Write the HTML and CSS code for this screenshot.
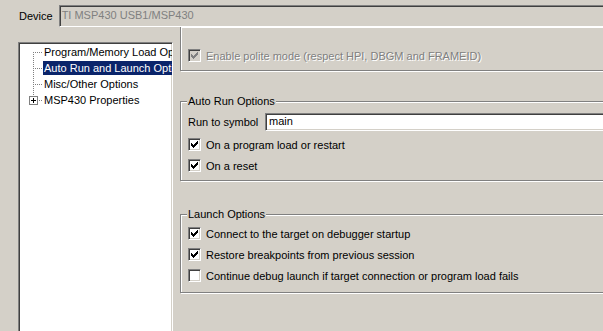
FILE: index.html
```html
<!DOCTYPE html>
<html lang="en">
<head>
  <meta charset="UTF-8">
  <title>Debug Properties</title>
  <link rel="stylesheet" href="styles.css">
</head>
<body>

  <div class="device-row">
    <span class="device-label">Device</span>
    <div class="device-field">TI MSP430 USB1/MSP430</div>
  </div>

  <div class="main">
    <div class="tree">
      <div class="tree-row first"><span class="twig"></span><span class="node">Program/Memory Load Options</span></div>
      <div class="tree-row"><span class="twig"></span><span class="node selected">Auto Run and Launch Options</span></div>
      <div class="tree-row"><span class="twig"></span><span class="node">Misc/Other Options</span></div>
      <div class="tree-row last">
        <span class="twig">
          <svg class="expander" width="9" height="9" viewBox="0 0 9 9" shape-rendering="crispEdges">
            <rect x="0.5" y="0.5" width="8" height="8" fill="#fff" stroke="#808080"/>
            <path d="M2 4h5v1h-5z M4 2h1v5h-1z" fill="#000"/>
          </svg>
        </span><span class="node">MSP430 Properties</span>
      </div>
    </div>

    <div class="pane">
      <div class="group polite">
        <div class="check-row disabled">
          <span class="box"><svg width="7" height="7" viewBox="0 0 7 7" shape-rendering="crispEdges"><path d="M0 2h1v3h-1z M1 3h1v3h-1z M2 4h1v3h-1z M3 3h1v3h-1z M4 2h1v3h-1z M5 1h1v3h-1z M6 0h1v3h-1z"/></svg></span>
          <span>Enable polite mode (respect HPI, DBGM and FRAMEID)</span>
        </div>
      </div>

      <div class="group auto-run">
        <div class="group-title">Auto Run Options</div>
        <div class="symbol-row">
          <span class="symbol-label">Run to symbol</span>
          <div class="text-field">main</div>
        </div>
        <div class="check-row">
          <span class="box"><svg width="7" height="7" viewBox="0 0 7 7" shape-rendering="crispEdges"><path d="M0 2h1v3h-1z M1 3h1v3h-1z M2 4h1v3h-1z M3 3h1v3h-1z M4 2h1v3h-1z M5 1h1v3h-1z M6 0h1v3h-1z"/></svg></span>
          <span>On a program load or restart</span>
        </div>
        <div class="check-row">
          <span class="box"><svg width="7" height="7" viewBox="0 0 7 7" shape-rendering="crispEdges"><path d="M0 2h1v3h-1z M1 3h1v3h-1z M2 4h1v3h-1z M3 3h1v3h-1z M4 2h1v3h-1z M5 1h1v3h-1z M6 0h1v3h-1z"/></svg></span>
          <span>On a reset</span>
        </div>
      </div>

      <div class="group launch">
        <div class="group-title">Launch Options</div>
        <div class="check-row">
          <span class="box"><svg width="7" height="7" viewBox="0 0 7 7" shape-rendering="crispEdges"><path d="M0 2h1v3h-1z M1 3h1v3h-1z M2 4h1v3h-1z M3 3h1v3h-1z M4 2h1v3h-1z M5 1h1v3h-1z M6 0h1v3h-1z"/></svg></span>
          <span>Connect to the target on debugger startup</span>
        </div>
        <div class="check-row">
          <span class="box"><svg width="7" height="7" viewBox="0 0 7 7" shape-rendering="crispEdges"><path d="M0 2h1v3h-1z M1 3h1v3h-1z M2 4h1v3h-1z M3 3h1v3h-1z M4 2h1v3h-1z M5 1h1v3h-1z M6 0h1v3h-1z"/></svg></span>
          <span>Restore breakpoints from previous session</span>
        </div>
        <div class="check-row">
          <span class="box"></span>
          <span>Continue debug launch if target connection or program load fails</span>
        </div>
      </div>
    </div>
  </div>

</body>
</html>
```

FILE: styles.css
```css
body {
  margin: 0;
  width: 603px;
  height: 331px;
  overflow: hidden;
  background-color: #d4d0c8;
  font-family: 'Liberation Sans', Arial, sans-serif;
  font-size: 11px;
  color: #000;
}

.device-row {
  display: flex;
  align-items: center;
  gap: 6px;
  padding: 5px 0 0 19px;
  margin-right: -20px;
}

.device-field {
  flex: 1;
  box-sizing: border-box;
  height: 22px;
  line-height: 18px;
  padding-left: 2px;
  color: #808080;
  border: 1px solid;
  border-color: #808080 #fff #fff #808080;
  box-shadow: inset 1px 1px 0 #404040, inset -1px -1px 0 #d4d0c8;
}

.main {
  display: flex;
}

/* tree on the left */
.tree {
  flex-shrink: 0;
  box-sizing: border-box;
  width: 155px;
  height: 300px;
  margin: 15px 0 0 18px;
  padding: 1px;
  background-color: #fff;
  border: 1px solid;
  border-color: #808080 #fff #fff #808080;
  box-shadow: inset 1px 1px 0 #404040, inset -1px -1px 0 #d4d0c8;
  overflow: hidden;
  white-space: nowrap;
}

.tree-row {
  display: flex;
  align-items: center;
  height: 16px;
}

.twig {
  flex-shrink: 0;
  display: flex;
  align-items: center;
  width: 23px;
  height: 16px;
  background:
    repeating-linear-gradient(to right, #808080 0 1px, transparent 1px 2px) 13px 8px / 10px 1px no-repeat,
    repeating-linear-gradient(to bottom, #808080 0 1px, transparent 1px 2px) 13px 0 / 1px 16px no-repeat;
}

.tree-row.first .twig {
  background:
    repeating-linear-gradient(to right, #808080 0 1px, transparent 1px 2px) 13px 8px / 10px 1px no-repeat,
    repeating-linear-gradient(to bottom, #808080 0 1px, transparent 1px 2px) 13px 8px / 1px 8px no-repeat;
}

.tree-row.last .twig {
  background:
    repeating-linear-gradient(to right, #808080 0 1px, transparent 1px 2px) 13px 8px / 10px 1px no-repeat,
    repeating-linear-gradient(to bottom, #808080 0 1px, transparent 1px 2px) 13px 0 / 1px 4px no-repeat;
}

.expander {
  display: block;
  margin-left: 9px;
}

.node {
  flex-shrink: 0;
  height: 14px;
  line-height: 14px;
  padding: 0 1px;
}

.node.selected {
  background-color: #0a246a;
  color: #fff;
}

/* option groups on the right */
.pane {
  flex: 1;
  margin: 0 -20px 0 7px;
}

.group {
  border: 1px solid #808080;
  box-shadow: inset 1px 1px 0 #fff, 1px 1px 0 #fff;
  padding: 0 0 4px 7px;
}

.group.polite {
  border-top: none;
  padding-top: 18px;
}

.group.auto-run {
  margin-top: 30px;
}

.group.launch {
  margin-top: 33px;
  padding-bottom: 6px;
}

.group-title {
  display: table;
  margin: -7px 0 2px -1px;
  padding: 0 1px;
  line-height: 13px;
  background-color: #d4d0c8;
}

.symbol-row {
  display: flex;
  align-items: center;
  margin: 5px 0 3px;
}

.symbol-label {
  flex-shrink: 0;
  width: 77px;
}

.text-field {
  flex: 1;
  box-sizing: border-box;
  height: 18px;
  line-height: 14px;
  padding-left: 3px;
  background-color: #fff;
  border: 1px solid;
  border-color: #808080 #fff #fff #808080;
  box-shadow: inset 1px 1px 0 #404040, inset -1px -1px 0 #d4d0c8;
}

.check-row {
  display: flex;
  align-items: center;
  gap: 5px;
  height: 21px;
  white-space: nowrap;
}

.box {
  flex-shrink: 0;
  display: flex;
  align-items: center;
  justify-content: center;
  box-sizing: border-box;
  width: 13px;
  height: 13px;
  background-color: #fff;
  border: 1px solid;
  border-color: #808080 #fff #fff #808080;
  box-shadow: inset 1px 1px 0 #404040, inset -1px -1px 0 #d4d0c8;
}

.box svg {
  display: block;
  fill: #000;
}

.check-row.disabled {
  color: #808080;
  text-shadow: 1px 1px 0 #fff;
}

.check-row.disabled .box {
  background-color: #d4d0c8;
}

.check-row.disabled .box svg {
  fill: #808080;
}
```
